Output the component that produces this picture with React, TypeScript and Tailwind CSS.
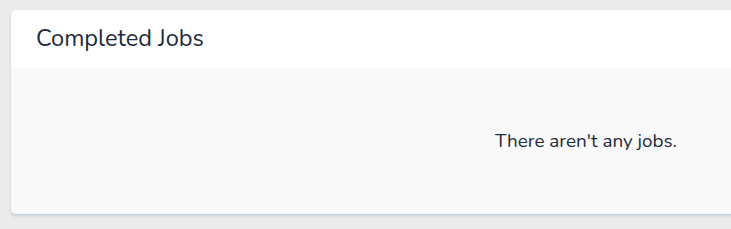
export default function App() {
  return (
    <div className="h-[229px] w-[731px] overflow-hidden bg-[#ebebeb] pl-[11px] pt-[10px] font-['Nunito','Open_Sans','Noto_Sans',sans-serif]">
      <div className="w-[1150px] rounded-[5px] bg-white shadow-[0_2px_3px_rgba(160,180,200,0.55)]">
        <div className="flex h-[57px] items-center px-[25px]">
          <h2 className="text-[23.6px] font-normal leading-none text-[#1e2a3b]">Completed Jobs</h2>
        </div>
        <div className="flex h-[147px] items-center justify-center rounded-b-[5px] bg-[#f9f9f9] pt-[2px]">
          <p className="text-[18.9px] leading-none text-[#1e2a3b]">There aren't any jobs.</p>
        </div>
      </div>
    </div>
  );
}
